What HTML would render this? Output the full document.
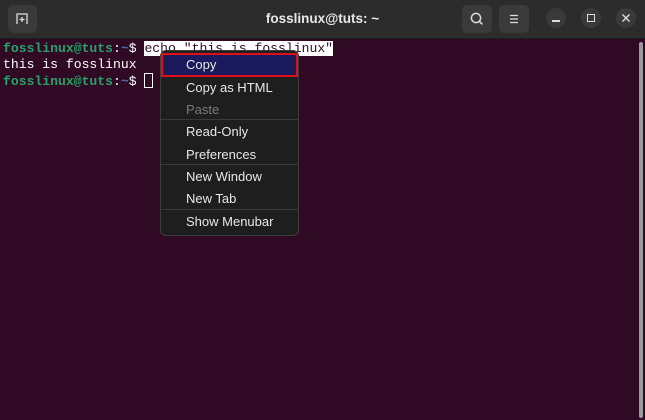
<!DOCTYPE html>
<html><head><style>
*{margin:0;padding:0;box-sizing:border-box}
body{width:645px;height:420px;overflow:hidden;background:#300a24;font-family:"Liberation Sans",sans-serif;position:relative}
.tb{position:absolute;left:0;top:0;width:645px;height:39px;background:#2c2c2c;border-bottom:1px solid #1e1e1e}
.btn{position:absolute;background:#3a3a3a;border-radius:5px}
.circ{position:absolute;width:20px;height:20px;border-radius:50%;background:#3a3a3a;top:8px}
.title{position:absolute;left:0;width:645px;top:11px;text-align:center;color:#e8e8e8;font-weight:bold;font-size:13.5px}
.term{position:absolute;left:3px;top:41px;font-family:"Liberation Mono",monospace;font-size:13.1px;line-height:16px;color:#fff;white-space:pre}
.g{color:#26a269;font-weight:bold}.b{color:#4a6a9a;font-weight:bold}
.sel{background:#fff;color:#300a24}
.cur{display:inline-block;width:9px;height:15px;border:1px solid #fff;vertical-align:-3px}
.menu{position:absolute;left:160px;top:50px;width:139px;height:186px;background:#1e1e1e;border:1px solid #3d3d3d;border-radius:6px}
.it{position:absolute;left:25px;color:#e8e8e8;font-size:13px}
.sep{position:absolute;left:0;width:137px;height:1px;background:#3a3a3a}
.sb{position:absolute;left:639px;top:42px;width:4px;height:376px;background:#9a9a9a;border-radius:2px}
</style></head><body>
<div class="tb">
 <div class="btn" style="left:8px;top:5px;width:29px;height:28px"></div>
 <svg style="position:absolute;left:15px;top:12px" width="14" height="14" viewBox="0 0 14 14"><path d="M2 12V2h10v10" fill="none" stroke="#ddd" stroke-width="1.3"/><path d="M7 5v5M4.5 7.5h5" stroke="#ddd" stroke-width="1.3"/></svg>
 <div class="title">fosslinux@tuts: ~</div>
 <div class="btn" style="left:462px;top:5px;width:30px;height:28px"></div>
 <svg style="position:absolute;left:469px;top:11px" width="16" height="16" viewBox="0 0 16 16"><circle cx="7" cy="7" r="4.6" fill="none" stroke="#ddd" stroke-width="1.5"/><path d="M10.3 10.3l3 3" stroke="#ddd" stroke-width="1.6"/></svg>
 <div class="btn" style="left:499px;top:5px;width:30px;height:28px"></div>
 <svg style="position:absolute;left:507px;top:12px" width="14" height="14" viewBox="0 0 14 14"><path d="M3 3.5h8M3 7h8M3 10.5h8" stroke="#ddd" stroke-width="1.3"/></svg>
 <div class="circ" style="left:546px"></div><div style="position:absolute;left:552px;top:20px;width:8px;height:1.5px;background:#ddd"></div>
 <div class="circ" style="left:581px"></div><div style="position:absolute;left:587px;top:14px;width:8px;height:8px;border:1.4px solid #ddd"></div>
 <div class="circ" style="left:616px"></div>
 <svg style="position:absolute;left:621px;top:13px" width="10" height="10" viewBox="0 0 10 10"><path d="M1.5 1.5l7 7M8.5 1.5l-7 7" stroke="#ddd" stroke-width="1.4"/></svg>
</div>
<div class="term"><span class="g">fosslinux@tuts</span>:<span class="b">~</span>$ <span class="sel">echo "this is fosslinux"</span>
this is fosslinux
<span class="g">fosslinux@tuts</span>:<span class="b">~</span>$ <span class="cur"></span></div>
<div class="sb"></div>
<div class="menu">
 <div style="position:absolute;left:0;top:2px;width:137px;height:24px;background:#1a1a5c;border:2px solid #e0101a"></div>
 <div class="it" style="top:6px">Copy</div>
 <div class="it" style="top:29px">Copy as HTML</div>
 <div class="it" style="top:51px;color:#7a7a7a">Paste</div>
 <div class="sep" style="top:68px"></div>
 <div class="it" style="top:73px">Read-Only</div>
 <div class="it" style="top:96px">Preferences</div>
 <div class="sep" style="top:113px"></div>
 <div class="it" style="top:118px">New Window</div>
 <div class="it" style="top:140px">New Tab</div>
 <div class="sep" style="top:158px"></div>
 <div class="it" style="top:163px">Show Menubar</div>
</div>
</body></html>
